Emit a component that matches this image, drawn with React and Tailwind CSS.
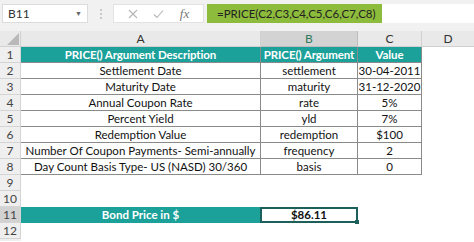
import React from 'react';

const font = { fontFamily: 'Lato, "Liberation Sans", sans-serif' };

const rows = [
  ['Settlement Date', 'settlement', '30-04-2011'],
  ['Maturity Date', 'maturity', '31-12-2020'],
  ['Annual Coupon Rate', 'rate', '5%'],
  ['Percent Yield', 'yld', '7%'],
  ['Redemption Value', 'redemption', '$100'],
  ['Number Of Coupon Payments- Semi-annually', 'frequency', '2'],
  ['Day Count Basis Type- US (NASD) 30/360', 'basis', '0'],
];

function RowHead({ n, active }) {
  return (
    <div
      className={`w-[21px] shrink-0 h-full flex items-center justify-center text-[12px] font-normal tracking-normal text-[#444] border-r border-b border-[#d4d4d4] ${
        active ? 'bg-[#d2d2d2]' : 'bg-[#efefef]'
      }`}
    >
      {n}
    </div>
  );
}

function FormulaBar() {
  return (
    <div className="h-[31px] bg-[#f1f1f1] flex items-start pt-[4px] pl-[2px]">
      <div className="w-[86px] h-[19px] bg-white border border-[#dcdcdc] flex items-center justify-between px-[5px] text-[12px] text-[#333]">
        <span>B11</span>
        <span className="text-[7px] text-[#666]">▼</span>
      </div>
      <div className="w-[25px] h-[19px] flex flex-col items-center justify-center gap-[2px]">
        <span className="w-[2px] h-[2px] bg-[#bbb] rounded-full" />
        <span className="w-[2px] h-[2px] bg-[#bbb] rounded-full" />
        <span className="w-[2px] h-[2px] bg-[#bbb] rounded-full" />
      </div>
      <div className="w-[91px] h-[19px] bg-white border border-[#e2e2e2] flex items-center justify-around px-[6px]">
        <svg width="10" height="10" viewBox="0 0 10 10">
          <path d="M1 1 L9 9 M9 1 L1 9" stroke="#b5b5b5" strokeWidth="1.1" />
        </svg>
        <svg width="11" height="10" viewBox="0 0 11 10">
          <path d="M1 5.5 L4 8.5 L10 1.5" stroke="#b5b5b5" strokeWidth="1.1" fill="none" />
        </svg>
        <span className="text-[13px] italic text-[#777]" style={{ fontFamily: '"Liberation Serif", serif' }}>
          fx
        </span>
      </div>
      <div className="w-[3px]" />
      <div className="w-[175px] h-[19px] bg-[#8dbb3b] flex items-center pl-[10px] text-[11.5px] text-[#222] whitespace-nowrap">
        =PRICE(C2,C3,C4,C5,C6,C7,C8)
      </div>
      <div className="flex-1 h-[19px] bg-white" />
    </div>
  );
}

function HeaderRow() {
  return (
    <div className="h-[16px] flex bg-[#e9e9e9] text-[12px] text-[#333]">
      <div className="w-[21px] h-full flex items-end justify-end pr-[1px] pb-[1px] border-r border-b border-[#d0d0d0]">
        <svg width="12" height="12" viewBox="0 0 12 12">
          <path d="M12 0 L12 12 L0 12 Z" fill="#b9b9b9" />
        </svg>
      </div>
      <div className="w-[240px] h-full flex items-center justify-center border-r border-b border-[#d0d0d0]">A</div>
      <div className="w-[97px] h-full flex items-center justify-center bg-[#d3d3d3] text-[#2f7a5c] border-r border-b border-[#bdbdbd]">B</div>
      <div className="w-[64px] h-full flex items-center justify-center border-r border-b border-[#d0d0d0]">C</div>
      <div className="flex-1 h-full flex items-center justify-center border-b border-[#d0d0d0]">D</div>
    </div>
  );
}

const cell = 'h-full shrink-0 flex items-center justify-center whitespace-nowrap';

export default function App() {
  return (
    <div className="w-[474px] h-[242px] bg-white overflow-hidden" style={font}>
      <FormulaBar />
      <HeaderRow />

      <div className="h-[16px] flex text-white font-bold text-[11.5px] tracking-[-0.1px]">
        <RowHead n={1} />
        <div className={`${cell} w-[240px] bg-[#1ba19a] border-r border-b border-[#8a8a8a]`}>PRICE() Argument Description</div>
        <div className={`${cell} w-[97px] bg-[#1ba19a] border-r border-b border-[#8a8a8a]`}>PRICE() Argument</div>
        <div className={`${cell} w-[64px] bg-[#1ba19a] border-r border-b border-[#8a8a8a]`}>Value</div>
      </div>

      {rows.map((r, i) => (
        <div key={i} className="h-[16px] flex text-[11.5px] text-[#111]">
          <RowHead n={i + 2} />
          <div className={`${cell} w-[240px] border-r border-b border-[#8a8a8a]`}>{r[0]}</div>
          <div className={`${cell} w-[97px] border-r border-b border-[#8a8a8a]`}>{r[1]}</div>
          <div className={`${cell} w-[64px] border-r border-b border-[#8a8a8a]`}>{r[2]}</div>
        </div>
      ))}

      {[9, 10].map((n) => (
        <div key={n} className="h-[16px] flex">
          <RowHead n={n} />
        </div>
      ))}

      <div className="h-[16px] flex text-[11.5px] font-bold">
        <RowHead n={11} active />
        <div className={`${cell} w-[239px] bg-[#1ba19a] text-white`}>Bond Price in $</div>
        <div className={`${cell} relative w-[98px] border-2 border-[#1d5f5a] text-[#111]`}>
          $86.11
          <span className="absolute -right-[3px] -bottom-[3px] w-[4px] h-[4px] bg-[#1d5f5a]" />
        </div>
      </div>

      <div className="h-[16px] flex">
        <RowHead n={12} />
      </div>
      <div className="h-[2px] flex">
        <div className="w-[21px] bg-[#efefef]" />
      </div>
    </div>
  );
}
